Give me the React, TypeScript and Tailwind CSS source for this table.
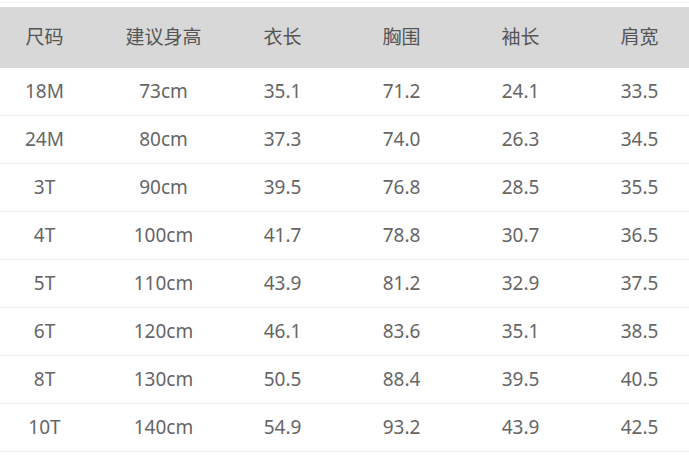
const headers = ['尺码', '建议身高', '衣长', '胸围', '袖长', '肩宽'];

const rows = [
  ['18M', '73cm', '35.1', '71.2', '24.1', '33.5'],
  ['24M', '80cm', '37.3', '74.0', '26.3', '34.5'],
  ['3T', '90cm', '39.5', '76.8', '28.5', '35.5'],
  ['4T', '100cm', '41.7', '78.8', '30.7', '36.5'],
  ['5T', '110cm', '43.9', '81.2', '32.9', '37.5'],
  ['6T', '120cm', '46.1', '83.6', '35.1', '38.5'],
  ['8T', '130cm', '50.5', '88.4', '39.5', '40.5'],
  ['10T', '140cm', '54.9', '93.2', '43.9', '42.5'],
];

export default function App() {
  return (
    <div className="w-[689px] h-[470px] overflow-hidden bg-white font-['Noto_Sans','Noto_Sans_CJK_SC',sans-serif] text-[19px] text-[#666]">
      <div className="h-[5px] border-t border-[#f2f2f2] mt-[2px]" />
      {/* Header */}
      <div className="-ml-[15px] grid grid-cols-[repeat(6,119px)] h-[61px] items-center bg-[#d8d8d8] text-[#555]">
        {headers.map((h) => (
          <div key={h} className="text-center leading-none">
            {h}
          </div>
        ))}
      </div>
      {/* Rows */}
      {rows.map((r) => (
        <div
          key={r[0]}
          className="-ml-[15px] grid grid-cols-[repeat(6,119px)] h-[48px] items-center border-b border-[#f0f0f0]"
        >
          {r.map((c, i) => (
            <div key={i} className="text-center leading-none">
              {c}
            </div>
          ))}
        </div>
      ))}
    </div>
  );
}
